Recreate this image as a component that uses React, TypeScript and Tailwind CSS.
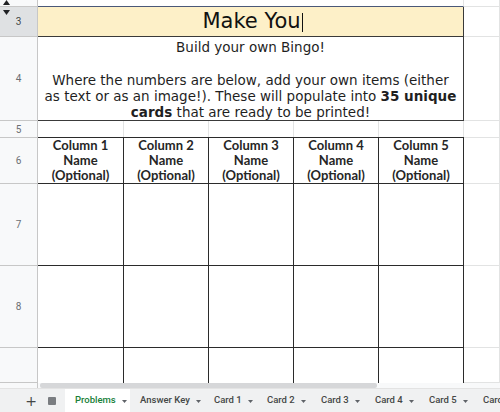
import React from "react";

const HDR = "shrink-0 w-[38px] bg-[#f8f9fa] border-r border-b border-[#c7c7c7] flex items-center justify-center text-[10px] text-[#6b6f73] font-['Roboto',sans-serif]";
const LIGHT = "border-r border-b border-[#e2e3e3]";
const HEAD_TXT = "flex items-center justify-center text-center text-[13px] leading-[15px] font-bold text-[#262626] font-['Lato',sans-serif]";

function Arrow() {
  return (
    <svg width="5" height="3" viewBox="0 0 5 3" className="ml-[6px] mt-[1px] shrink-0">
      <path d="M0 0 L5 0 L2.5 3 Z" fill="#5f6368" />
    </svg>
  );
}

function Tab({ label, active, w }: { label: string; active?: boolean; w: string }) {
  return (
    <div
      className={
        "flex items-center h-full pl-[10px] shrink-0 text-[9.5px] font-medium font-['Roboto',sans-serif] " +
        w +
        (active ? " bg-white text-[#188038]" : " text-[#444746]")
      }
    >
      <span className="whitespace-nowrap">{label}</span>
      <Arrow />
    </div>
  );
}

function HeadCell({ n, w }: { n: number; w: string }) {
  return (
    <div className={"shrink-0 border-r border-b border-[#2b2b2b] " + w + " " + HEAD_TXT}>
      <span>
        Column {n}
        <br />
        Name
        <br />
        (Optional)
      </span>
    </div>
  );
}

function BodyRow({ h, num, last }: { h: string; num?: string; last?: boolean }) {
  const dark = "shrink-0 border-r border-[#2b2b2b] " + (last ? "" : "border-b");
  return (
    <div className={"flex " + h}>
      <div className={HDR}>{num}</div>
      <div className={"w-[86px] " + dark} />
      <div className={"w-[85px] " + dark} />
      <div className={"w-[85px] " + dark} />
      <div className={"w-[85px] " + dark} />
      <div className={"w-[85px] " + dark} />
      <div className={"flex-1 " + LIGHT} />
    </div>
  );
}

export default function App() {
  return (
    <div className="w-[500px] h-[412px] overflow-hidden bg-white flex flex-col">
      <div className="h-[388px] shrink-0 flex flex-col overflow-hidden">
        {/* row 2 (partial) */}
        <div className="flex h-[7px] shrink-0">
          <div className={HDR + " relative"}>
            <svg width="7" height="5" viewBox="0 0 7 5" className="absolute left-[3px] top-0">
              <path d="M0 5 L7 5 L3.5 0 Z" fill="#202124" />
            </svg>
          </div>
          <div className="w-[426px] shrink-0 border-r border-[#e2e3e3] border-b border-b-[#4a5878]" />
          <div className={"flex-1 " + LIGHT} />
        </div>
        {/* row 3 */}
        <div className="flex h-[30px] shrink-0">
          <div className={HDR + " relative !bg-[#dfe1e3] !text-[#444746]"}>
            <svg width="7" height="5" viewBox="0 0 7 5" className="absolute left-[3px] top-[3px]">
              <path d="M0 0 L7 0 L3.5 5 Z" fill="#202124" />
            </svg>
            3
          </div>
          <div className="w-[426px] shrink-0 bg-[#fdf0c8] border-r border-b border-[#3a3a3a] flex items-center justify-center font-['DejaVu_Sans',sans-serif] text-[21px] text-[#111] pt-[1px] pl-[4px]">
            <span>Make You</span>
            <span className="inline-block w-[1px] h-[19px] bg-[#111] ml-[1px]" />
          </div>
          <div className={"flex-1 " + LIGHT} />
        </div>
        {/* row 4 */}
        <div className="flex h-[84px] shrink-0">
          <div className={HDR}>4</div>
          <div className="w-[426px] shrink-0 border-r border-b border-[#3a3a3a] text-center font-['DejaVu_Sans',sans-serif] text-[13.5px] leading-[16.3px] text-[#1f1f1f] pt-[2px] whitespace-nowrap">
            Build your own Bingo!
            <br />
            <br />
            Where the numbers are below, add your own items (either
            <br />
            as text or as an image!). These will populate into <b>35 unique</b>
            <br />
            <b>cards</b> that are ready to be printed!
          </div>
          <div className={"flex-1 " + LIGHT} />
        </div>
        {/* row 5 */}
        <div className="flex h-[17px] shrink-0">
          <div className={HDR}>5</div>
          <div className="w-[426px] shrink-0 border-b border-[#2b2b2b] flex">
            <div className="w-[86px] border-r border-[#e2e3e3]" />
            <div className="w-[85px] border-r border-[#e2e3e3]" />
            <div className="w-[85px] border-r border-[#e2e3e3]" />
            <div className="w-[85px] border-r border-[#e2e3e3]" />
            <div className="w-[85px] border-r border-[#e2e3e3]" />
          </div>
          <div className={"flex-1 " + LIGHT} />
        </div>
        {/* row 6 */}
        <div className="flex h-[46px] shrink-0">
          <div className={HDR}>6</div>
          <HeadCell n={1} w="w-[86px]" />
          <HeadCell n={2} w="w-[85px]" />
          <HeadCell n={3} w="w-[85px]" />
          <HeadCell n={4} w="w-[85px]" />
          <HeadCell n={5} w="w-[85px]" />
          <div className={"flex-1 " + LIGHT} />
        </div>
        <BodyRow h="h-[82px] shrink-0" num="7" />
        <BodyRow h="h-[82px] shrink-0" num="8" />
        <BodyRow h="h-[35px] shrink-0" last />
        {/* scrollbar */}
        <div className="flex h-[5px] shrink-0">
          <div className="w-[38px] shrink-0 bg-[#f8f9fa] border-r border-[#c7c7c7]" />
          <div className="flex-1 bg-[#f8f9fa] pl-[2px]">
            <div className="w-[337px] h-full bg-[#d6d7d9] rounded-[2px]" />
          </div>
        </div>
      </div>
      {/* tab bar */}
      <div className="h-[24px] shrink-0 flex items-center bg-[#f0f1f2] border-t border-[#e3e3e3] overflow-hidden">
        <div className="w-[24px] shrink-0" />
        <div className="w-[14px] shrink-0 text-center text-[14px] leading-none text-[#444746] font-['DejaVu_Sans',sans-serif]">+</div>
        <div className="w-[27px] shrink-0 flex items-center justify-center">
          <div className="w-[8px] h-[8px] bg-[#7a7d81] rounded-[1px]" />
        </div>
        <div className="flex h-full">
          <Tab label="Problems" active w="w-[65px]" />
          <Tab label="Answer Key" w="w-[74px]" />
          <Tab label="Card 1" w="w-[53px]" />
          <Tab label="Card 2" w="w-[54px]" />
          <Tab label="Card 3" w="w-[54px]" />
          <Tab label="Card 4" w="w-[54px]" />
          <Tab label="Card 5" w="w-[54px]" />
          <Tab label="Card 6" w="w-[54px]" />
        </div>
      </div>
    </div>
  );
}
